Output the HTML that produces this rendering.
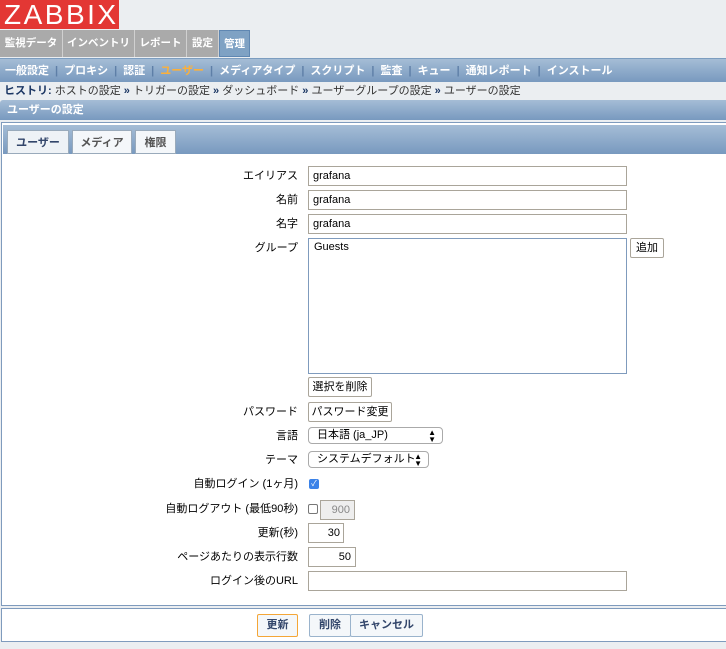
<!DOCTYPE html>
<html><head><meta charset="utf-8"><style>
*{box-sizing:border-box;margin:0;padding:0}
body{width:726px;height:649px;background:#ebeef1;font-family:"Liberation Sans","Noto Sans CJK JP",sans-serif;font-size:11px;color:#000;position:relative;overflow:hidden}
.a{position:absolute}
.logo{left:0;top:0;width:119px;height:29px;background:#e33734;color:#fff;font-size:28px;line-height:29px;padding-left:4px;letter-spacing:2.5px}
.tab{top:30px;height:27px;background:#aaa;color:#fff;font-weight:bold;font-size:10.5px;line-height:27px;text-align:center;border-right:1px solid #d0d0d0;white-space:nowrap;overflow:hidden}
.blue{background:linear-gradient(#a5bdd6,#7899bf);}
.menu{left:0;top:58px;width:726px;height:24px;color:#fff;font-weight:bold;line-height:24px;padding-left:5px;border-top:1px solid #7c9dc0;white-space:nowrap}
.menu span.s{color:#5e7fa7;margin:0 6px}
.hist{left:0;top:83px;width:726px;height:17px;line-height:17px;padding-left:4px;color:#333;white-space:nowrap}
.hist b{color:#1b3663}
.hdr{left:0;top:100px;width:726px;height:20px;color:#fff;font-weight:bold;line-height:20px;padding-left:7px;border-radius:3px 0 0 0}
.frame{left:1px;top:122px;width:725px;height:484px;background:#fff;border:1px solid #7f9bbd;border-right:none}
.tbar{left:3px;top:125px;width:723px;height:29px}
.ftab{top:130px;height:24px;background:#f4f7fa;color:#33466b;font-weight:bold;text-align:center;line-height:24px;border:1px solid #9ab}
.lbl{right:428px;text-align:right;white-space:nowrap;line-height:20px}
.in{border:1px solid #aaa59a;background:#fff;padding-left:4px;line-height:18px;height:20px}
.btn{border:1px solid #aaa59a;background:#fff;text-align:center;line-height:18px;height:20px;border-radius:2px}
.sel{border:1px solid #aaa;border-radius:4px;background:#fff;padding-left:8px;line-height:15px;height:17px}
.sel i{position:absolute;right:6px;top:0;font-style:normal;font-size:8px;line-height:7px;top:1px}
.foot{left:1px;top:608px;width:725px;height:34px;background:#fff;border:1px solid #7f9bbd;border-right:none}
.fb{top:614px;height:23px;line-height:21px;text-align:center;font-weight:bold;color:#33466b;background:#f4f7fa;border:1px solid #9ab3cc;border-radius:2px}
</style></head><body>
<div class="a logo">ZABBIX</div>
<div class="a" style="left:0;top:30px;width:726px;height:28px;background:#ebeef1"></div>
<div class="a tab" style="left:0;width:63px">監視データ</div>
<div class="a tab" style="left:63px;width:72px">インベントリ</div>
<div class="a tab" style="left:135px;width:52px">レポート</div>
<div class="a tab" style="left:187px;width:32px">設定</div>
<div class="a tab" style="left:219px;width:31px;background:#7fa2c4;border:1px solid #5f87b2">管理</div>
<div class="a menu blue">一般設定<span class="s">|</span>プロキシ<span class="s">|</span>認証<span class="s">|</span><span style="color:#fbb03b">ユーザー</span><span class="s">|</span>メディアタイプ<span class="s">|</span>スクリプト<span class="s">|</span>監査<span class="s">|</span>キュー<span class="s">|</span>通知レポート<span class="s">|</span>インストール</div>
<div class="a hist"><b>ヒストリ:</b> ホストの設定 <b>»</b> トリガーの設定 <b>»</b> ダッシュボード <b>»</b> ユーザーグループの設定 <b>»</b> ユーザーの設定</div>
<div class="a hdr blue">ユーザーの設定</div>
<div class="a frame"></div>
<div class="a tbar blue"></div>
<div class="a ftab" style="left:7px;width:62px;background:#eef2f6">ユーザー</div>
<div class="a ftab" style="left:72px;width:60px;color:#555">メディア</div>
<div class="a ftab" style="left:135px;width:41px;color:#555">権限</div>

<div class="a lbl" style="top:166px">エイリアス</div>
<div class="a in" style="left:308px;top:166px;width:319px">grafana</div>
<div class="a lbl" style="top:190px">名前</div>
<div class="a in" style="left:308px;top:190px;width:319px">grafana</div>
<div class="a lbl" style="top:214px">名字</div>
<div class="a in" style="left:308px;top:214px;width:319px">grafana</div>
<div class="a lbl" style="top:238px;line-height:20px">グループ</div>
<div class="a" style="left:308px;top:238px;width:319px;height:136px;border:1px solid #7f9bbd;padding:2px 5px">Guests</div>
<div class="a btn" style="left:630px;top:238px;width:34px">追加</div>
<div class="a btn" style="left:308px;top:377px;width:64px">選択を削除</div>
<div class="a lbl" style="top:402px">パスワード</div>
<div class="a btn" style="left:308px;top:402px;width:84px">パスワード変更</div>
<div class="a lbl" style="top:426px">言語</div>
<div class="a sel" style="left:308px;top:427px;width:135px">日本語 (ja_JP)<i>▲<br>▼</i></div>
<div class="a lbl" style="top:450px">テーマ</div>
<div class="a sel" style="left:308px;top:451px;width:121px">システムデフォルト<i>▲<br>▼</i></div>
<div class="a lbl" style="top:474px">自動ログイン (1ヶ月)</div>
<div class="a" style="left:309px;top:479px;width:10px;height:10px;background:#3b82e8;border-radius:2px;color:#fff;font-size:8px;line-height:10px;text-align:center">✓</div>
<div class="a lbl" style="top:499px">自動ログアウト (最低90秒)</div>
<div class="a" style="left:308px;top:504px;width:10px;height:10px;border:1px solid #777;border-radius:2px;background:#fff"></div>
<div class="a in" style="left:320px;top:500px;width:35px;background:#eee;color:#888;text-align:right;padding-right:4px">900</div>
<div class="a lbl" style="top:523px">更新(秒)</div>
<div class="a in" style="left:308px;top:523px;width:36px;text-align:right;padding-right:3px">30</div>
<div class="a lbl" style="top:547px">ページあたりの表示行数</div>
<div class="a in" style="left:308px;top:547px;width:48px;text-align:right;padding-right:4px">50</div>
<div class="a lbl" style="top:571px">ログイン後のURL</div>
<div class="a in" style="left:308px;top:571px;width:319px"></div>

<div class="a foot"></div>
<div class="a fb" style="left:257px;width:41px;border-color:#f4a637">更新</div>
<div class="a fb" style="left:309px;width:42px">削除</div>
<div class="a fb" style="left:350px;width:73px">キャンセル</div>
</body></html>
